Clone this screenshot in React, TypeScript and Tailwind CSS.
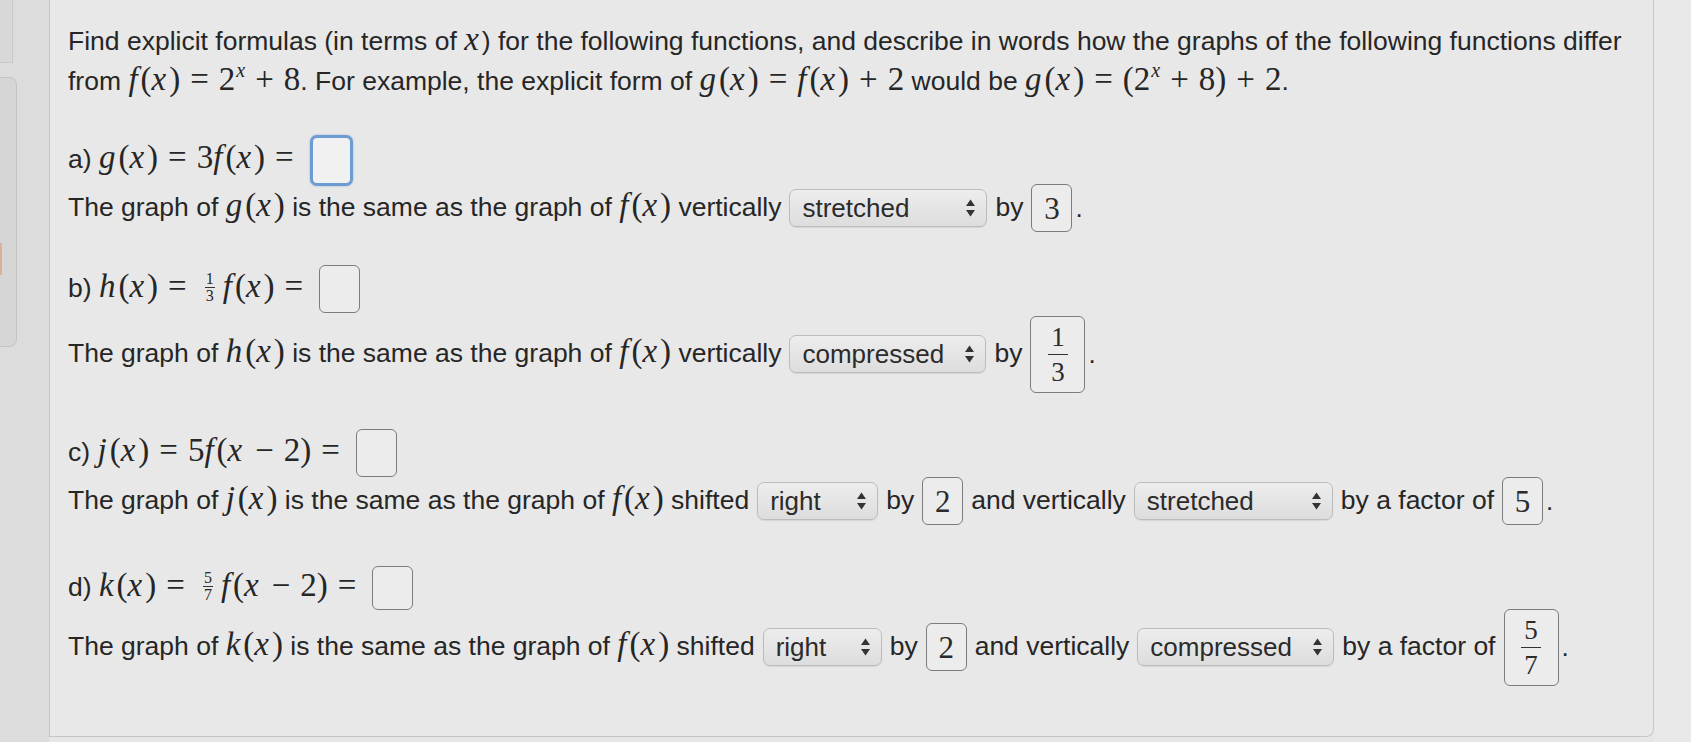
import React from 'react'

// ── math helpers ─────────────────────────────────────────

function V({ children }: { children: React.ReactNode }) {
  return <span className="italic pr-[3px]">{children}</span>
}

function M({ children }: { children: React.ReactNode }) {
  return (
    <span className="font-['Liberation_Serif',serif] text-[33px] leading-none whitespace-nowrap">{children}</span>
  )
}

function Op({ children }: { children: React.ReactNode }) {
  return <span className="mx-[10px]">{children}</span>
}

function Sup({ children }: { children: React.ReactNode }) {
  return <sup className="text-[20px] italic -top-[13px] ml-[1px]">{children}</sup>
}

function Fn({ name, arg }: { name: string; arg: React.ReactNode }) {
  return (
    <>
      <V>{name}</V>({arg})
    </>
  )
}

function TinyFrac({ n, d }: { n: string; d: string }) {
  return (
    <span className="inline-flex flex-col items-center align-middle mx-[8px] text-[16px] leading-[16px] relative -top-[2px]">
      <span className="border-b border-[#333] px-[1px]">{n}</span>
      <span>{d}</span>
    </span>
  )
}

// ── inputs ───────────────────────────────────────────────

function Arrows() {
  return (
    <svg width="11" height="20" viewBox="0 0 11 20" className="shrink-0">
      <path d="M5.5 1.5 L10 8 L1 8 Z" fill="#333" />
      <path d="M5.5 18.5 L10 12 L1 12 Z" fill="#333" />
    </svg>
  )
}

function Sel({ label, w }: { label: string; w: string }) {
  return (
    <div
      className={`${w} h-[38px] shrink-0 flex items-center justify-between pl-[12px] pr-[10px] rounded-[7px] border border-[#bcbcbc] bg-gradient-to-b from-[#ededed] to-[#dddddd] shadow-[0_1px_1px_rgba(0,0,0,0.08)]`}
    >
      <span className="text-[26px] text-[#2b2b2b]">{label}</span>
      <Arrows />
    </div>
  )
}

function Box({ children, w = 'w-[41px]', h = 'h-[48px]' }: { children?: React.ReactNode; w?: string; h?: string }) {
  return (
    <div
      className={`${w} ${h} shrink-0 flex flex-col items-center justify-center rounded-[6px] border-[1.5px] border-[#7c7c7c] bg-[#ececec] font-['Liberation_Serif',serif] text-[31px] text-[#2b2b2b] leading-none`}
    >
      {children}
    </div>
  )
}

function FocusBox() {
  return (
    <div className="w-[43px] h-[51px] shrink-0 rounded-[7px] border-[3px] border-[#6d9bd3] bg-[#f1f1f1] shadow-[0_0_2px_rgba(70,120,200,0.5)]" />
  )
}

function BigFrac({ n, d }: { n: string; d: string }) {
  return (
    <Box w="w-[55px]" h="h-[77px]">
      <span className="text-[27px] leading-[28px] pb-[3px] border-b-[1.5px] border-[#333] px-[3px]">{n}</span>
      <span className="text-[27px] leading-[28px] pt-[3px]">{d}</span>
    </Box>
  )
}

function Dot() {
  return <span className="-ml-[5px] text-[26px]">.</span>
}

// ── page ─────────────────────────────────────────────────

export default function App() {
  return (
    <div className="w-[1691px] h-[742px] flex overflow-hidden bg-[#e6e6e6] font-['Liberation_Sans',Arial,sans-serif] text-[#262626]">
      {/* left rail */}
      <div className="w-[49px] shrink-0 bg-[#dcdcdc] relative">
        <div className="w-[13px] h-[63px] border-r border-b border-[#c9c9c9] bg-[#d8d8d8]" />
        <div className="mt-[14px] w-[17px] h-[270px] rounded-r-[8px] border border-l-0 border-[#c4c4c4] bg-[#d6d6d6] relative">
          <div className="absolute left-0 top-[165px] w-[2px] h-[32px] bg-[#dbb09a]" />
        </div>
      </div>

      {/* question panel */}
      <div className="w-[1605px] h-[737px] shrink-0 bg-[#e8e8e8] border-r border-b border-l border-[#c6c6c6] rounded-br-[8px] pl-[18px] flex flex-col text-[26.5px]">
        <div className="mt-[21px] leading-[40px] whitespace-nowrap">
          <div>
            Find explicit formulas (in terms of <M><V>x</V></M>) for the following functions, and describe in words how
            the graphs of the following functions differ
          </div>
          <div>
            from{' '}
            <M>
              <Fn name="f" arg={<V>x</V>} />
              <Op>=</Op>2<Sup>x</Sup>
              <Op>+</Op>8
            </M>
            . For example, the explicit form of{' '}
            <M>
              <Fn name="g" arg={<V>x</V>} />
              <Op>=</Op>
              <Fn name="f" arg={<V>x</V>} />
              <Op>+</Op>2
            </M>{' '}
            would be{' '}
            <M>
              <Fn name="g" arg={<V>x</V>} />
              <Op>=</Op>(2<Sup>x</Sup>
              <Op>+</Op>8)<Op>+</Op>2
            </M>
            .
          </div>
        </div>

        {/* a */}
        <div className="mt-[36px] h-[46px] flex items-center gap-[6px] whitespace-nowrap">
          <span>
            a){' '}
            <M>
              <Fn name="g" arg={<V>x</V>} />
              <Op>=</Op>3<Fn name="f" arg={<V>x</V>} />
              <Op>=</Op>
            </M>
          </span>
          <FocusBox />
        </div>
        <div className="h-[50px] flex items-center gap-[8px] whitespace-nowrap">
          <span>
            The graph of <M><Fn name="g" arg={<V>x</V>} /></M> is the same as the graph of{' '}
            <M><Fn name="f" arg={<V>x</V>} /></M> vertically
          </span>
          <Sel label="stretched" w="w-[198px]" />
          <span>by</span>
          <Box>3</Box>
          <Dot />
        </div>

        {/* b */}
        <div className="mt-[32px] h-[48px] flex items-center gap-[6px] whitespace-nowrap">
          <span>
            b){' '}
            <M>
              <Fn name="h" arg={<V>x</V>} />
              <Op>=</Op>
              <TinyFrac n="1" d="3" />
              <Fn name="f" arg={<V>x</V>} />
              <Op>=</Op>
            </M>
          </span>
          <Box />
        </div>
        <div className="mt-[2px] h-[78px] flex items-center gap-[8px] whitespace-nowrap">
          <span>
            The graph of <M><Fn name="h" arg={<V>x</V>} /></M> is the same as the graph of{' '}
            <M><Fn name="f" arg={<V>x</V>} /></M> vertically
          </span>
          <Sel label="compressed" w="w-[197px]" />
          <span>by</span>
          <BigFrac n="1" d="3" />
          <Dot />
        </div>

        {/* c */}
        <div className="mt-[36px] h-[48px] flex items-center gap-[6px] whitespace-nowrap">
          <span>
            c){' '}
            <M>
              <Fn name="j" arg={<V>x</V>} />
              <Op>=</Op>5<Fn name="f" arg={<><V>x</V><Op>−</Op>2</>} />
              <Op>=</Op>
            </M>
          </span>
          <Box />
        </div>
        <div className="h-[48px] flex items-center gap-[8px] whitespace-nowrap">
          <span>
            The graph of <M><Fn name="j" arg={<V>x</V>} /></M> is the same as the graph of{' '}
            <M><Fn name="f" arg={<V>x</V>} /></M> shifted
          </span>
          <Sel label="right" w="w-[121px]" />
          <span>by</span>
          <Box>2</Box>
          <span>and vertically</span>
          <Sel label="stretched" w="w-[199px]" />
          <span>by a factor of</span>
          <Box>5</Box>
          <Dot />
        </div>

        {/* d */}
        <div className="mt-[42px] h-[42px] flex items-center gap-[6px] whitespace-nowrap">
          <span>
            d){' '}
            <M>
              <Fn name="k" arg={<V>x</V>} />
              <Op>=</Op>
              <TinyFrac n="5" d="7" />
              <Fn name="f" arg={<><V>x</V><Op>−</Op>2</>} />
              <Op>=</Op>
            </M>
          </span>
          <Box h="h-[44px]" />
        </div>
        <div className="h-[76px] flex items-center gap-[8px] whitespace-nowrap">
          <span>
            The graph of <M><Fn name="k" arg={<V>x</V>} /></M> is the same as the graph of{' '}
            <M><Fn name="f" arg={<V>x</V>} /></M> shifted
          </span>
          <Sel label="right" w="w-[119px]" />
          <span>by</span>
          <Box>2</Box>
          <span>and vertically</span>
          <Sel label="compressed" w="w-[197px]" />
          <span>by a factor of</span>
          <BigFrac n="5" d="7" />
          <Dot />
        </div>
      </div>

      {/* right margin */}
      <div className="flex-1 bg-[#e9e9e9]" />
    </div>
  )
}
